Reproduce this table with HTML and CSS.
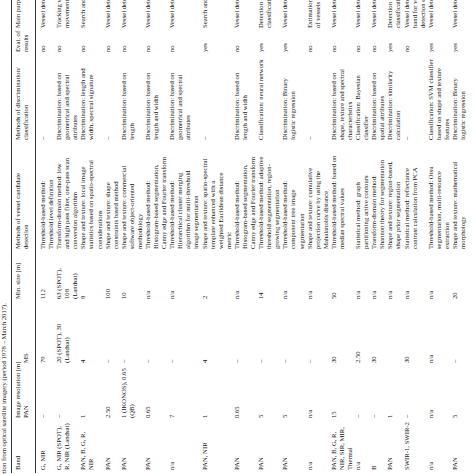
FILE: index.html
```html
<!DOCTYPE html>
<html>
<head>
<meta charset="utf-8">
<link rel="stylesheet" href="styles.css">
</head>
<body>
<div class="viewport">
  <div class="page">
    <div class="caption"><span>Table 1 Overview of studies on vessel detection from optical satellite imagery (period 1978 – March 2017).</span></div>
    <table class="tbl">
      <colgroup>
        <col class="c-band"><col class="c-pan"><col class="c-ms"><col class="c-min"><col class="c-det"><col class="c-disc"><col class="c-eval"><col class="c-main">
      </colgroup>
      <thead>
        <tr>
          <th class="first">Band</th>
          <th colspan="2">Image resolution [m]<div class="sub"><span class="sub-pan">PAN</span><span>MS</span></div></th>
          <th>Min. size [m]</th>
          <th>Methods of vessel candidate<br>detection</th>
          <th>Methods of discrimination/<br>classification</th>
          <th>Eval. of<br>results</th>
          <th>Main purpose</th>
        </tr>
      </thead>
      <tbody>
        <tr><td class="first">G, NIR</td><td>–</td><td>79</td><td>112</td><td>Threshold-based method:<br>Threshold level definition</td><td>–</td><td>no</td><td>Vessel detection</td></tr>
        <tr><td class="first">G, NIR (SPOT),<br>R, NIR (Landsat)</td><td>–</td><td>20 (SPOT), 30<br>(Landsat)</td><td>63 (SPOT),<br>108<br>(Landsat)</td><td>Transform-domain method: low<br>and high pass filter, one-pass scan<br>conversion algorithm</td><td>Discrimination: based on<br>geometrical and spectral<br>attributes</td><td>no</td><td>Tracking vessel<br>movement</td></tr>
        <tr><td class="first">PAN, B, G, R,<br>NIR</td><td>1</td><td>4</td><td>8</td><td>Shape and texture: local image<br>statistics based on spatio-spectral<br>considerations</td><td>Discrimination: length and<br>width, spectral signature</td><td>no</td><td>Search and rescue</td></tr>
        <tr><td class="first">PAN</td><td>2.50</td><td>–</td><td>100</td><td>Shape and texture: shape<br>constraints based method</td><td>–</td><td>no</td><td>Vessel detection</td></tr>
        <tr><td class="first">PAN</td><td>1 (IKONOS), 0.65<br>(QB)</td><td>–</td><td>10</td><td>Shape and texture: commercial<br>software object-oriented<br>methodology</td><td>Discrimination: based on<br>length</td><td>no</td><td>Vessel detection</td></tr>
        <tr><td class="first">PAN</td><td>0.65</td><td>–</td><td>n/a</td><td>Threshold-based method:<br>Histogram-based segmentation,<br>Canny edge and Fourier transform</td><td>Discrimination: based on<br>length and width</td><td>no</td><td>Vessel detection</td></tr>
        <tr><td class="first">n/a</td><td>7</td><td>–</td><td>n/a</td><td>Threshold-based method:<br>Hierarchical cluster merging<br>algorithm for multi-threshold<br>image segmentation</td><td>Discrimination: based on<br>geometrical and spectral<br>attributes</td><td>no</td><td>Vessel detection</td></tr>
        <tr><td class="first">PAN, NIR</td><td>1</td><td>4</td><td>2</td><td>Shape and texture: spatio-spectral<br>template enhanced with a<br>weighted Euclidean distance<br>metric</td><td>–</td><td>yes</td><td>Search and rescue</td></tr>
        <tr><td class="first">PAN</td><td>0.65</td><td>–</td><td>n/a</td><td>Threshold-based method:<br>Histogram-based segmentation,<br>Canny edge and Fourier transform</td><td>Discrimination: based on<br>length and width</td><td>no</td><td>Vessel detection</td></tr>
        <tr><td class="first">PAN</td><td>5</td><td>–</td><td>14</td><td>Threshold-based method: adaptive<br>threshold segmentation, region-<br>growing segmentation</td><td>Classification: neural network</td><td>yes</td><td>Detection and<br>classification</td></tr>
        <tr><td class="first">PAN</td><td>5</td><td>–</td><td>n/a</td><td>Threshold-based method:<br>component tree image<br>segmentation</td><td>Discrimination: Binary<br>logistic regression</td><td>yes</td><td>Vessel detection</td></tr>
        <tr><td class="first">n/a</td><td>n/a</td><td>–</td><td>n/a</td><td>Shape and texture: cumulative<br>projection curve by using the<br>Mahalanobis distance</td><td>–</td><td>no</td><td>Estimation of number<br>of vessels</td></tr>
        <tr><td class="first">PAN, B, G, R,<br>NIR, SIR, MIR,<br>Thermal</td><td>15</td><td>30</td><td>50</td><td>Threshold-based method: based on<br>median spectral values</td><td>Discrimination: based on<br>shape, texture and spectral<br>characteristics</td><td>no</td><td>Vessel detection</td></tr>
        <tr><td class="first">n/a</td><td>–</td><td>2.50</td><td>n/a</td><td>Statistical method: graph<br>partitioning active contours</td><td>Classification: Bayesian<br>classifier</td><td>no</td><td>Vessel detection</td></tr>
        <tr><td class="first">B</td><td>–</td><td>30</td><td>n/a</td><td>Transform-domain method:<br>Shannon theory for segmentation</td><td>Discrimination: based on<br>spatial attributes</td><td>no</td><td>Vessel detection</td></tr>
        <tr><td class="first">PAN</td><td>1</td><td></td><td>n/a</td><td>Shape and texture: region-based,<br>shape prior segmentation</td><td>Discrimination: similarity<br>calculation</td><td>yes</td><td>Detection and<br>classification</td></tr>
        <tr><td class="first">SWIR-1, SWIR-2</td><td>–</td><td>30</td><td>n/a</td><td>Statistical method: reflectance<br>contrast calculation from PCA</td><td>–</td><td>no</td><td>Vessel detection, optimal<br>band for vessel<br>detection evaluation</td></tr>
        <tr><td class="first">n/a</td><td>n/a</td><td>n/a</td><td>n/a</td><td>Threshold-based method: Otsu<br>segmentation, multi-resource<br>extraction</td><td>Classification: SVM classifier<br>based on shape and texture<br>features</td><td>yes</td><td>Vessel detection</td></tr>
        <tr><td class="first">PAN</td><td>5</td><td>–</td><td>20</td><td>Shape and texture: mathematical<br>morphology</td><td>Discrimination: Binary<br>logistic regression</td><td>yes</td><td>Vessel detection</td></tr>
      </tbody>
    </table>
  </div>
</div>
</body>
</html>
```

FILE: styles.css
```css
html, body {
  margin: 0;
  padding: 0;
  background: #ffffff;
}

.viewport {
  width: 474px;
  height: 474px;
  overflow: hidden;
  background: #ffffff;
}

.page {
  width: 474px;
  height: 474px;
  transform: rotate(-90deg);
  transform-origin: 237px 237px;
  font-family: "Liberation Serif", "Times New Roman", serif;
  font-size: 6.7px;
  color: #151515;
}

.caption {
  width: 170px;
  height: 8px;
  line-height: 8px;
  margin-top: -1px;
  display: flex;
  justify-content: flex-end;
  white-space: nowrap;
}

.tbl {
  margin-top: 3px;
  border-collapse: collapse;
  table-layout: fixed;
  width: 560px;
}

.c-band { width: 55px; }
.c-pan { width: 55px; }
.c-ms { width: 64px; }
.c-min { width: 50px; }
.c-det { width: 109px; }
.c-disc { width: 88px; }
.c-eval { width: 24px; }
.c-main { width: 115px; }

.tbl th {
  border-top: 1px solid #333333;
  border-bottom: 1px solid #333333;
  padding: 2px 0 5px 0;
  text-align: left;
  font-weight: normal;
  vertical-align: top;
  line-height: 8px;
  white-space: nowrap;
}

.sub {
  display: flex;
}

.sub-pan {
  width: 55px;
}

.tbl td {
  padding: 0;
  line-height: 8.08px;
  vertical-align: top;
  white-space: nowrap;
}

.tbl tbody tr:first-child td {
  padding-top: 3px;
}

.tbl .first {
  padding-left: 3px;
}
```
